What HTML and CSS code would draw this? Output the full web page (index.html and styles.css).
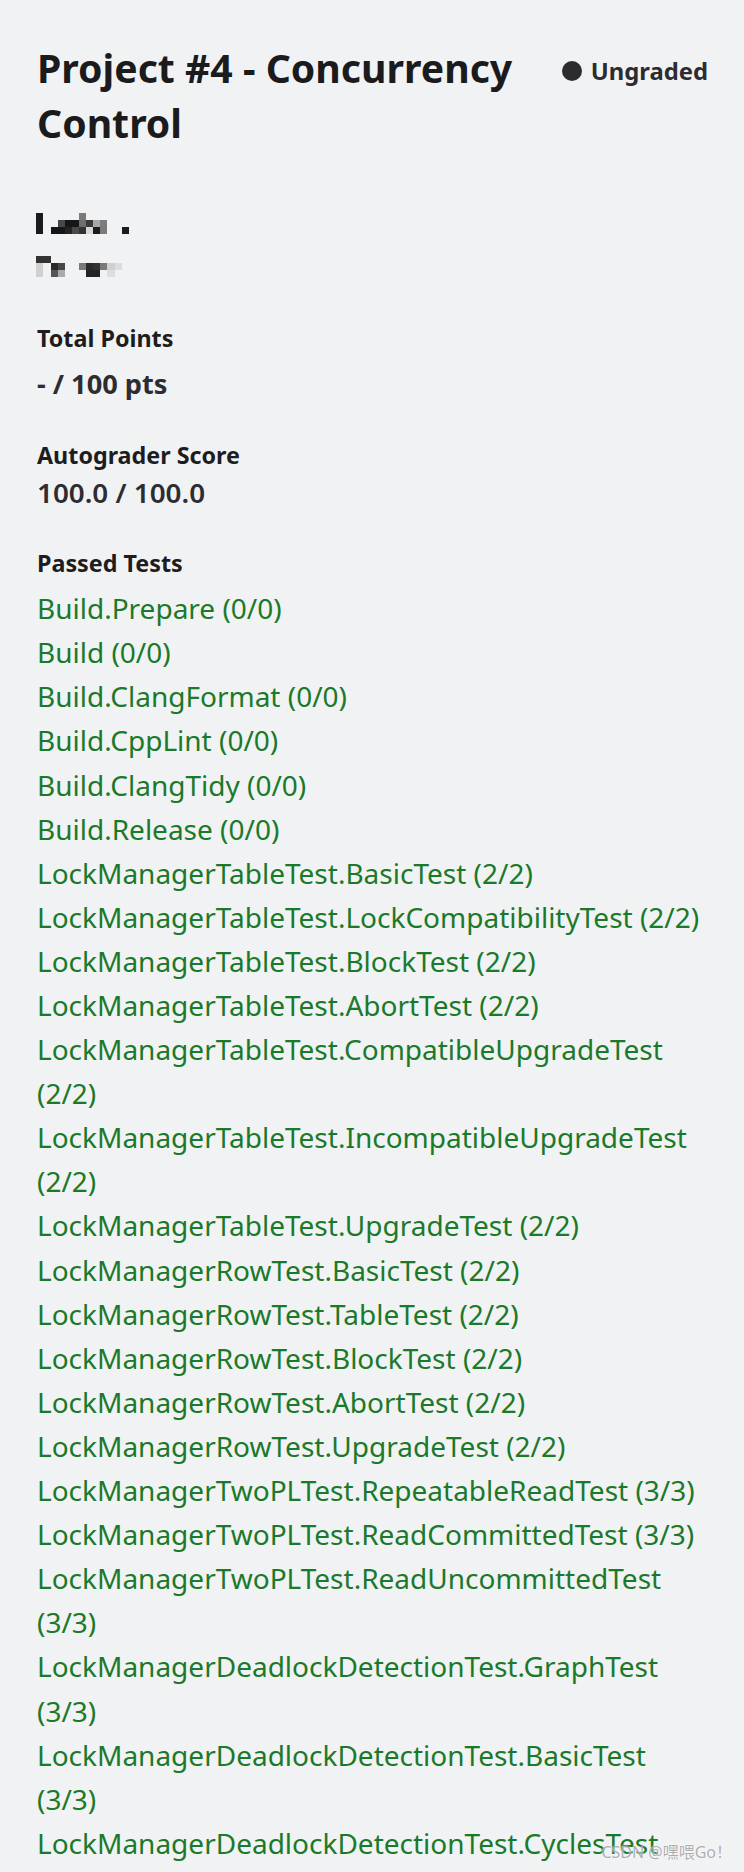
FILE: index.html
```html
<!DOCTYPE html>
<html lang="en">
<head>
    <meta charset="UTF-8">
    <meta name="viewport" content="width=device-width, initial-scale=1.0">
    <title>Project #4 - Concurrency Control</title>
    <link rel="stylesheet" href="styles.css">
</head>
<body>
    <div class="page">
        <header class="submission-header">
            <h1 class="assignment-title">Project #4 - Concurrency Control</h1>
            <div class="status-badge"><span class="status-dot"></span>Ungraded</div>
        </header>

        <div class="student">
            <svg class="student-blur" viewBox="0 0 13 9" shape-rendering="crispEdges" aria-label="hidden student name">
                <rect x="0" y="0" width="1" height="3" fill="#1b1b1b"/>
                <rect x="6" y="0" width="1" height="1" fill="#7a7a7a"/>
                <rect x="3" y="1" width="1" height="1" fill="#474747"/>
                <rect x="4" y="1" width="2" height="1" fill="#161616"/>
                <rect x="6" y="1" width="1" height="1" fill="#6e6e6e"/>
                <rect x="7" y="1" width="1" height="1" fill="#3a3a3a"/>
                <rect x="8" y="1" width="1" height="1" fill="#a8a8a8"/>
                <rect x="9" y="1" width="1" height="1" fill="#7c7c7c"/>
                <rect x="2" y="2" width="2" height="1" fill="#161616"/>
                <rect x="4" y="2" width="1" height="1" fill="#232323"/>
                <rect x="5" y="2" width="1" height="1" fill="#4a4a4a"/>
                <rect x="6" y="2" width="1" height="1" fill="#333333"/>
                <rect x="7" y="2" width="1" height="1" fill="#d8d8d8"/>
                <rect x="8" y="2" width="1" height="1" fill="#1c1c1c"/>
                <rect x="9" y="2" width="1" height="1" fill="#7a7a7a"/>
                <rect x="12" y="2" width="1" height="1" fill="#1b1b1b"/>

                <rect x="0" y="6" width="2" height="1" fill="#333333"/>
                <rect x="0" y="7" width="1" height="2" fill="#d0d0d0"/>
                <rect x="2" y="7" width="1" height="1" fill="#2a2a2a"/>
                <rect x="3" y="7" width="1" height="1" fill="#474747"/>
                <rect x="6" y="7" width="1" height="1" fill="#7a7a7a"/>
                <rect x="7" y="7" width="1" height="1" fill="#2a2a2a"/>
                <rect x="8" y="7" width="1" height="1" fill="#333333"/>
                <rect x="9" y="7" width="1" height="1" fill="#7a7a7a"/>
                <rect x="10" y="7" width="1" height="1" fill="#d0d0d0"/>
                <rect x="11" y="7" width="1" height="1" fill="#dcdcdc"/>
                <rect x="2" y="8" width="1" height="1" fill="#555555"/>
                <rect x="3" y="8" width="1" height="1" fill="#aaaaaa"/>
                <rect x="7" y="8" width="2" height="1" fill="#232323"/>
                <rect x="10" y="8" width="1" height="1" fill="#dddddd"/>
            </svg>
        </div>

        <section class="score-block">
            <div class="score-label">Total Points</div>
            <div class="score-total">- / 100 pts</div>
        </section>

        <section class="score-block autograder">
            <div class="score-label">Autograder Score</div>
            <div class="score-auto">100.0 / 100.0</div>
        </section>

        <section class="tests">
            <div class="score-label">Passed Tests</div>
            <ul class="test-list" id="testList"></ul>
        </section>
    </div>

    <div class="watermark">CSDN @嘿喂Go！</div>

    <script>
        const passedTests = [
            ['Build.Prepare', '0/0'],
            ['Build', '0/0'],
            ['Build.ClangFormat', '0/0'],
            ['Build.CppLint', '0/0'],
            ['Build.ClangTidy', '0/0'],
            ['Build.Release', '0/0'],
            ['LockManagerTableTest.BasicTest', '2/2'],
            ['LockManagerTableTest.LockCompatibilityTest', '2/2'],
            ['LockManagerTableTest.BlockTest', '2/2'],
            ['LockManagerTableTest.AbortTest', '2/2'],
            ['LockManagerTableTest.CompatibleUpgradeTest', '2/2'],
            ['LockManagerTableTest.IncompatibleUpgradeTest', '2/2'],
            ['LockManagerTableTest.UpgradeTest', '2/2'],
            ['LockManagerRowTest.BasicTest', '2/2'],
            ['LockManagerRowTest.TableTest', '2/2'],
            ['LockManagerRowTest.BlockTest', '2/2'],
            ['LockManagerRowTest.AbortTest', '2/2'],
            ['LockManagerRowTest.UpgradeTest', '2/2'],
            ['LockManagerTwoPLTest.RepeatableReadTest', '3/3'],
            ['LockManagerTwoPLTest.ReadCommittedTest', '3/3'],
            ['LockManagerTwoPLTest.ReadUncommittedTest', '3/3'],
            ['LockManagerDeadlockDetectionTest.GraphTest', '3/3'],
            ['LockManagerDeadlockDetectionTest.BasicTest', '3/3'],
            ['LockManagerDeadlockDetectionTest.CyclesTest', '3/3']
        ];

        const list = document.getElementById('testList');
        list.innerHTML = passedTests
            .map(t => `<li><a href="#" class="test-link">${t[0]} (${t[1]})</a></li>`)
            .join('');
    </script>
</body>
</html>
```

FILE: styles.css
```css
body {
    background-color: #f1f2f4;
    color: #1d1d20;
    font-family: "Noto Sans", "Open Sans", "Noto Sans CJK SC", sans-serif;
    margin: 0;
    overflow: hidden;
}
.page {
    padding: 40px 37px 0 37px;
}
.submission-header {
    display: flex;
    align-items: flex-start;
}
.assignment-title {
    flex: 1;
    margin: 0;
    font-size: 39.2px;
    line-height: 55px;
    font-weight: 700;
    color: #1b1b1d;
}
.status-badge {
    flex-shrink: 0;
    display: flex;
    align-items: center;
    gap: 9px;
    margin-left: 24px;
    margin-top: 15px;
    margin-right: -1px;
    font-size: 23.8px;
    line-height: 32px;
    font-weight: 700;
    color: #2c2c30;
}
.status-dot {
    width: 20px;
    height: 20px;
    border-radius: 50%;
    background-color: #2c2c30;
}
.student {
    margin-top: 63px;
    height: 64px;
}
.student-blur {
    display: block;
    width: 93px;
    height: 64px;
    margin-left: -1px;
}
.score-block {
    margin-top: 46px;
}
.score-block.autograder {
    margin-top: 38px;
}
.score-label {
    font-size: 23.3px;
    line-height: 31.6px;
    font-weight: 700;
    color: #1d1d20;
}
.score-total {
    margin-top: 10px;
    font-size: 27.2px;
    line-height: 37px;
    font-weight: 700;
    color: #2d2d31;
}
.score-auto {
    margin-top: 2.6px;
    font-size: 27.8px;
    line-height: 37.8px;
    font-weight: 600;
    color: #2d2d31;
}
.tests {
    margin-top: 36px;
}
.test-list {
    list-style: none;
    margin: 7px 0 0 0;
    padding: 0;
}
.test-list li {
    font-size: 28px;
    line-height: 44.1px;
}
.test-link {
    color: #1b792a;
    text-decoration: none;
}
.watermark {
    position: absolute;
    right: 12px;
    top: 1841px;
    font-size: 16px;
    line-height: 22px;
    color: rgba(160, 160, 165, 0.85);
    text-shadow: 0 0 2px #ffffff;
}
```
